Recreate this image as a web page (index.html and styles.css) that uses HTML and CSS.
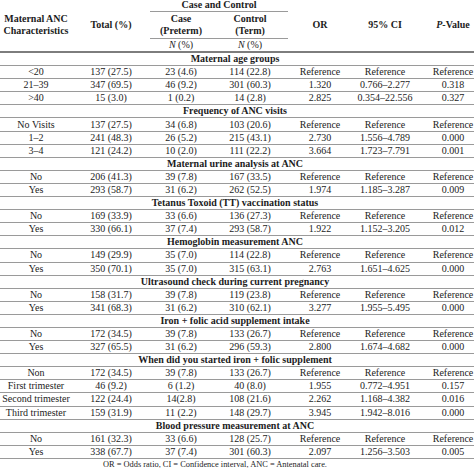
FILE: index.html
```html
<!DOCTYPE html>
<html>
<head>
<meta charset="utf-8">
<link rel="stylesheet" href="styles.css">
</head>
<body>
<table class="anc">
  <colgroup>
    <col class="c1"><col class="c2"><col class="c3"><col class="c4"><col class="c5"><col class="c6"><col class="c7">
  </colgroup>
  <thead>
    <tr class="h1">
      <th rowspan="3" class="hb">Maternal ANC<br>Characteristics</th>
      <th rowspan="3" class="hb">Total (%)</th>
      <th colspan="2" class="cc">Case and Control</th>
      <th rowspan="3" class="hb">OR</th>
      <th rowspan="3" class="hb">95% CI</th>
      <th rowspan="3" class="hb pcol"><i>P</i>-Value</th>
    </tr>
    <tr class="h2">
      <th class="cc">Case<br>(Preterm)</th>
      <th class="cc">Control<br>(Term)</th>
    </tr>
    <tr class="h3">
      <th class="hb"><i>N</i> (%)</th>
      <th class="hb"><i>N</i> (%)</th>
    </tr>
  </thead>
  <tbody>
    <tr class="sec"><td colspan="7">Maternal age groups</td></tr>
    <tr><td>&lt;20</td><td>137 (27.5)</td><td>23 (4.6)</td><td>114 (22.8)</td><td>Reference</td><td>Reference</td><td class="pcol">Reference</td></tr>
    <tr><td>21–39</td><td>347 (69.5)</td><td>46 (9.2)</td><td>301 (60.3)</td><td>1.320</td><td>0.766–2.277</td><td class="pcol">0.318</td></tr>
    <tr><td>&gt;40</td><td>15 (3.0)</td><td>1 (0.2)</td><td>14 (2.8)</td><td>2.825</td><td>0.354–22.556</td><td class="pcol">0.327</td></tr>

    <tr class="sec"><td colspan="7">Frequency of ANC visits</td></tr>
    <tr><td>No Visits</td><td>137 (27.5)</td><td>34 (6.8)</td><td>103 (20.6)</td><td>Reference</td><td>Reference</td><td class="pcol">Reference</td></tr>
    <tr><td>1–2</td><td>241 (48.3)</td><td>26 (5.2)</td><td>215 (43.1)</td><td>2.730</td><td>1.556–4.789</td><td class="pcol">0.000</td></tr>
    <tr><td>3–4</td><td>121 (24.2)</td><td>10 (2.0)</td><td>111 (22.2)</td><td>3.664</td><td>1.723–7.791</td><td class="pcol">0.001</td></tr>

    <tr class="sec"><td colspan="7">Maternal urine analysis at ANC</td></tr>
    <tr><td>No</td><td>206 (41.3)</td><td>39 (7.8)</td><td>167 (33.5)</td><td>Reference</td><td>Reference</td><td class="pcol">Reference</td></tr>
    <tr><td>Yes</td><td>293 (58.7)</td><td>31 (6.2)</td><td>262 (52.5)</td><td>1.974</td><td>1.185–3.287</td><td class="pcol">0.009</td></tr>

    <tr class="sec"><td colspan="7">Tetanus Toxoid (TT) vaccination status</td></tr>
    <tr><td>No</td><td>169 (33.9)</td><td>33 (6.6)</td><td>136 (27.3)</td><td>Reference</td><td>Reference</td><td class="pcol">Reference</td></tr>
    <tr><td>Yes</td><td>330 (66.1)</td><td>37 (7.4)</td><td>293 (58.7)</td><td>1.922</td><td>1.152–3.205</td><td class="pcol">0.012</td></tr>

    <tr class="sec"><td colspan="7">Hemoglobin measurement ANC</td></tr>
    <tr><td>No</td><td>149 (29.9)</td><td>35 (7.0)</td><td>114 (22.8)</td><td>Reference</td><td>Reference</td><td class="pcol">Reference</td></tr>
    <tr><td>Yes</td><td>350 (70.1)</td><td>35 (7.0)</td><td>315 (63.1)</td><td>2.763</td><td>1.651–4.625</td><td class="pcol">0.000</td></tr>

    <tr class="sec"><td colspan="7">Ultrasound check during current pregnancy</td></tr>
    <tr><td>No</td><td>158 (31.7)</td><td>39 (7.8)</td><td>119 (23.8)</td><td>Reference</td><td>Reference</td><td class="pcol">Reference</td></tr>
    <tr><td>Yes</td><td>341 (68.3)</td><td>31 (6.2)</td><td>310 (62.1)</td><td>3.277</td><td>1.955–5.495</td><td class="pcol">0.000</td></tr>

    <tr class="sec"><td colspan="7">Iron + folic acid supplement intake</td></tr>
    <tr><td>No</td><td>172 (34.5)</td><td>39 (7.8)</td><td>133 (26.7)</td><td>Reference</td><td>Reference</td><td class="pcol">Reference</td></tr>
    <tr><td>Yes</td><td>327 (65.5)</td><td>31 (6.2)</td><td>296 (59.3)</td><td>2.800</td><td>1.674–4.682</td><td class="pcol">0.000</td></tr>

    <tr class="sec"><td colspan="7">When did you started iron + folic supplement</td></tr>
    <tr><td>Non</td><td>172 (34.5)</td><td>39 (7.8)</td><td>133 (26.7)</td><td>Reference</td><td>Reference</td><td class="pcol">Reference</td></tr>
    <tr><td>First trimester</td><td>46 (9.2)</td><td>6 (1.2)</td><td>40 (8.0)</td><td>1.955</td><td>0.772–4.951</td><td class="pcol">0.157</td></tr>
    <tr><td>Second trimester</td><td>122 (24.4)</td><td>14(2.8)</td><td>108 (21.6)</td><td>2.262</td><td>1.168–4.382</td><td class="pcol">0.016</td></tr>
    <tr><td>Third trimester</td><td>159 (31.9)</td><td>11 (2.2)</td><td>148 (29.7)</td><td>3.945</td><td>1.942–8.016</td><td class="pcol">0.000</td></tr>

    <tr class="sec"><td colspan="7">Blood pressure measurement at ANC</td></tr>
    <tr><td>No</td><td>161 (32.3)</td><td>33 (6.6)</td><td>128 (25.7)</td><td>Reference</td><td>Reference</td><td class="pcol">Reference</td></tr>
    <tr><td>Yes</td><td>338 (67.7)</td><td>37 (7.4)</td><td>301 (60.3)</td><td>2.097</td><td>1.256–3.503</td><td class="pcol">0.005</td></tr>
  </tbody>
</table>
<p class="note">OR = Odds ratio, CI = Confidence interval, ANC = Antenatal care.</p>
</body>
</html>
```

FILE: styles.css
```css
html, body {
  margin: 0;
  padding: 0;
  background: #ffffff;
  overflow: hidden;
}
body {
  width: 474px;
  height: 468px;
  font-family: "Liberation Serif", "Times New Roman", serif;
  color: #1c1c1c;
}
.anc {
  border-collapse: collapse;
  table-layout: fixed;
  width: 480px;
  margin-top: -1px;
  font-size: 10px;
  line-height: 12px;
}
.c1 { width: 72px; }
.c2 { width: 78px; }
.c3 { width: 62px; }
.c4 { width: 76px; }
.c5 { width: 64px; }
.c6 { width: 66px; }
.c7 { width: 62px; }

.anc th, .anc td {
  padding: 0;
  text-align: center;
  white-space: nowrap;
  overflow: visible;
}
.anc th {
  font-weight: bold;
}
.h1 th.cc {
  height: 11px;
  border-bottom: 1.5px solid #9a9a9a;
}
.h2 th.cc {
  height: 26px;
  border-bottom: 1.5px solid #9a9a9a;
}
.h3 th {
  height: 12px;
  font-weight: normal;
  border-bottom: 2px solid #7d7d7d;
}
thead th.hb {
  border-bottom: 2px solid #7d7d7d;
}
.pcol {
  padding-left: 8px !important;
}
.anc tbody td {
  height: 12.1px;
  border-bottom: 1.2px solid #9a9a9a;
}
.sec td {
  font-weight: bold;
  padding-right: 10px !important;
}
.note {
  margin: 0;
  padding-left: 103px;
  font-size: 8.4px;
  line-height: 10px;
  padding-top: 1px;
}
```
